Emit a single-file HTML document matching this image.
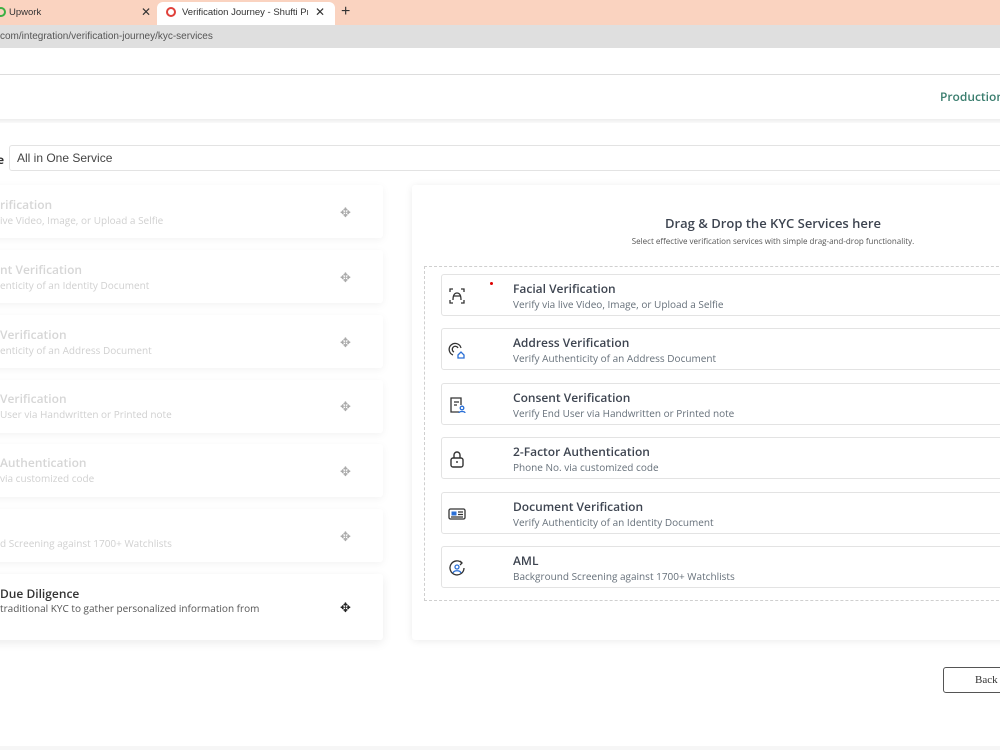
<!DOCTYPE html>
<html><head><style>
*{box-sizing:border-box;margin:0;padding:0}
body{width:1000px;height:750px;overflow:hidden;background:#fff;font-family:"Open Sans","Liberation Sans",sans-serif;position:relative}
.abs{position:absolute}
.tabs{left:0;top:0;width:1000px;height:25px;background:#fad3c0}
.tab{font-size:9.5px;color:#333;top:7px;font-family:"Liberation Sans",sans-serif}
.url{left:0;top:25px;width:1000px;height:23px;background:#dfdfdf;font-size:10px;color:#555;padding:6px 0 0 0;font-family:"Liberation Sans",sans-serif}
.lcard{left:-20px;width:403px;background:#fff;box-shadow:0 2px 8px rgba(0,0,0,.05);border-radius:3px}
.lcard .t{position:absolute;left:20px;font-size:12px;font-weight:600;color:#d6d6d6}
.lcard .s{position:absolute;left:20px;font-size:10px;color:#d0d0d0}
.mv{position:absolute;left:360px;font-size:13px;color:#aaa}
.item{left:441px;width:570px;height:42px;border:1px solid #e3e3e3;border-radius:3px;background:#fff}
.item .t{position:absolute;left:71px;top:5px;font-size:12px;font-weight:600;color:#3d4450}
.item .s{position:absolute;left:71px;top:22px;font-size:10px;color:#66707a}
.item svg{position:absolute;left:5px;top:11px}
</style></head><body>
<div class="abs tabs"></div>
<div class="abs" style="left:-4px;top:7px;width:10px;height:10px;border-radius:50%;border:2px solid #3cb043"></div>
<div class="abs tab" style="left:9px">Upwork</div>
<div class="abs tab" style="left:141px;top:5px;font-size:12px">✕</div>
<div class="abs" style="left:157px;top:2px;width:178px;height:23px;background:#fff;border-radius:6px 6px 0 0"></div>
<div class="abs" style="left:166px;top:7px;width:10px;height:10px;border-radius:50%;border:2px solid #e0403a"></div>
<div class="abs tab" style="left:182px;width:126px;overflow:hidden;white-space:nowrap">Verification Journey - Shufti Pro</div>
<div class="abs tab" style="left:315px;top:5px;font-size:12px">✕</div>
<div class="abs tab" style="left:341px;top:3px;font-size:16px">+</div>
<div class="abs url">com/integration/verification-journey/kyc-services</div>
<div class="abs" style="left:0;top:74px;width:1000px;height:1px;background:#ddd"></div>
<div class="abs" style="left:0;top:119px;width:1000px;height:4px;background:linear-gradient(#eee,#fafafa)"></div>
<div class="abs" style="left:940px;top:88px;font-size:12px;font-weight:600;color:#3a7d6e">Production</div>
<div class="abs" style="left:-3px;top:151px;font-size:12px;font-weight:bold;color:#333">e</div>
<div class="abs" style="left:9px;top:145px;width:1000px;height:26px;border:1px solid #e3e3e3;border-radius:3px;font-size:12px;color:#444;padding:5px 0 0 7px;font-family:'Liberation Sans',sans-serif">All in One Service</div>

<div class="abs lcard" style="top:185px;height:53px"><div class="t" style="top:11px">rification</div><div class="s" style="top:28px">ive Video, Image, or Upload a Selfie</div><div class="mv" style="top:18px">✥</div></div>
<div class="abs lcard" style="top:250px;height:53px"><div class="t" style="top:11px">nt Verification</div><div class="s" style="top:28px">enticity of an Identity Document</div><div class="mv" style="top:18px">✥</div></div>
<div class="abs lcard" style="top:315px;height:53px"><div class="t" style="top:11px">Verification</div><div class="s" style="top:28px">enticity of an Address Document</div><div class="mv" style="top:18px">✥</div></div>
<div class="abs lcard" style="top:380px;height:53px"><div class="t" style="top:10px">Verification</div><div class="s" style="top:27px">User via Handwritten or Printed note</div><div class="mv" style="top:17px">✥</div></div>
<div class="abs lcard" style="top:444px;height:53px"><div class="t" style="top:10px">Authentication</div><div class="s" style="top:27px">via customized code</div><div class="mv" style="top:18px">✥</div></div>
<div class="abs lcard" style="top:509px;height:53px"><div class="s" style="top:27px">d Screening against 1700+ Watchlists</div><div class="mv" style="top:18px">✥</div></div>
<div class="abs lcard" style="top:574px;height:66px;box-shadow:0 3px 10px rgba(0,0,0,.08)"><div class="t" style="top:11px;color:#333">Due Diligence</div><div class="s" style="top:27px;color:#555">traditional KYC to gather personalized information from</div><div class="mv" style="top:24px;color:#222">✥</div></div>

<div class="abs" style="left:412px;top:185px;width:600px;height:455px;background:#fff;box-shadow:0 1px 8px rgba(0,0,0,.08);border-radius:3px"></div>
<div class="abs" style="left:573px;top:214px;width:400px;text-align:center;font-size:13px;font-weight:600;color:#3d4450">Drag &amp; Drop the KYC Services here</div>
<div class="abs" style="left:573px;top:236px;width:400px;text-align:center;font-size:8px;color:#555">Select effective verification services with simple drag-and-drop functionality.</div>
<div class="abs" style="left:424px;top:266px;width:600px;height:335px;border:1px dashed #cfcfcf"></div>

<div class="abs item" style="top:274px"><svg width="20" height="20" viewBox="0 0 20 20" fill="none" stroke="#333" stroke-width="1.3"><path d="M3 6V3h3M14 3h3v3M3 14v3h3M17 14v3h-3"/><path d="M6 14c0-4 1-7 4-7s4 3 4 7M7 10h6"/></svg><div class="t">Facial Verification</div><div class="s">Verify via live Video, Image, or Upload a Selfie</div><div style="position:absolute;left:48px;top:7px;width:3px;height:3px;border-radius:50%;background:#d00"></div></div>
<div class="abs item" style="top:328px"><svg width="20" height="20" viewBox="0 0 20 20" fill="none" stroke="#333" stroke-width="1.3"><path d="M14 8a6 6 0 1 0-8 7"/><path d="M11 8a3 3 0 1 0-4 4"/><path d="M11 15l3-3 3 3v3h-6z" stroke="#2a6fd6"/></svg><div class="t">Address Verification</div><div class="s">Verify Authenticity of an Address Document</div></div>
<div class="abs item" style="top:383px"><svg width="20" height="20" viewBox="0 0 20 20" fill="none" stroke="#333" stroke-width="1.3"><path d="M12 17H4V3h10v7M7 7h5M7 10h3"/><circle cx="15" cy="13" r="1.8" stroke="#2a6fd6"/><path d="M12 18c0-2 6-2 6 0" stroke="#2a6fd6"/></svg><div class="t">Consent Verification</div><div class="s">Verify End User via Handwritten or Printed note</div></div>
<div class="abs item" style="top:437px"><svg width="20" height="20" viewBox="0 0 20 20" fill="none" stroke="#333" stroke-width="1.4"><rect x="4" y="9" width="12" height="9" rx="2"/><path d="M7 9V6a3 3 0 0 1 6 0v3M10 12v2"/></svg><div class="t">2-Factor Authentication</div><div class="s">Phone No. via customized code</div></div>
<div class="abs item" style="top:492px"><svg width="20" height="20" viewBox="0 0 20 20" fill="none" stroke="#333" stroke-width="1.3"><rect x="2" y="5" width="16" height="10" rx="1.5"/><rect x="4.5" y="7.5" width="5" height="4" fill="#2a6fd6" stroke="none"/><path d="M11 8h5M11 10.5h5M4 13h12"/></svg><div class="t">Document Verification</div><div class="s">Verify Authenticity of an Identity Document</div></div>
<div class="abs item" style="top:546px"><svg width="20" height="20" viewBox="0 0 20 20" fill="none" stroke="#333" stroke-width="1.3"><path d="M15 5a7 7 0 1 0 2 5"/><path d="M13 3l2 2-2 2" /><circle cx="10" cy="9" r="2" stroke="#2a6fd6"/><path d="M6 15c1-3 7-3 8 0" stroke="#2a6fd6"/></svg><div class="t">AML</div><div class="s">Background Screening against 1700+ Watchlists</div></div>

<div class="abs" style="left:943px;top:667px;width:70px;height:26px;border:1px solid #555;border-radius:3px;font-size:11px;color:#333;padding:6px 0 0 31px;font-family:'Liberation Serif',serif">Back</div>
<div class="abs" style="left:0;top:746px;width:1000px;height:4px;background:#f6f6f6"></div>
</body></html>
